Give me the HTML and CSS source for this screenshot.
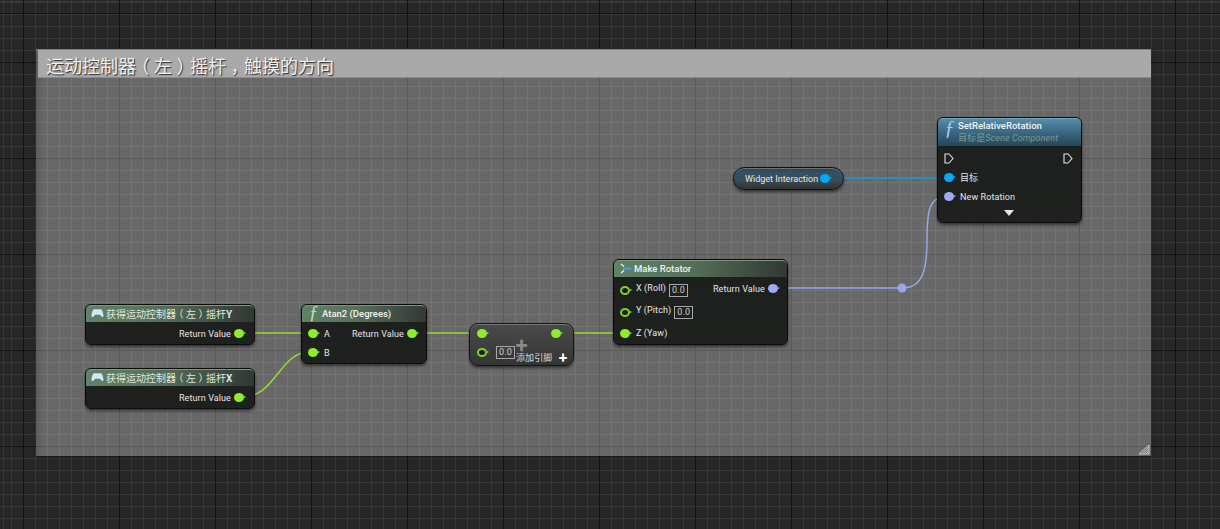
FILE: index.html
```html
<!DOCTYPE html>
<html lang="zh-CN">
  <head>
    <meta charset="UTF-8" />
    <title>Blueprint</title>
    <link rel="stylesheet" href="styles.css">
  </head>
  <body>
    <div class="graph">
      <section class="comment">
        <h1 class="comment-title">运动控制器<span class="punct">（</span>左<span class="punct">）</span>摇杆<span class="punct">，</span>触摸的方向</h1>
        <svg class="grip" width="12" height="11" viewBox="0 0 12 11">
          <path d="M11 1 L1 10 M11 3 L3.5 10 M11 5 L5.5 10 M11 7 L8 10 M11 9 L10 10 M1 10 H11 V1" stroke="#c8c8c8" stroke-width="1" fill="none" />
        </svg>
      </section>

      <svg class="wires" width="1220" height="529" viewBox="0 0 1220 529">
        <g fill="none" stroke="#90e030" stroke-width="1.5">
          <path d="M243 333 H309" />
          <path d="M243 397 C275 397 280 352 309 352" />
          <path d="M416 333 H477" />
          <path d="M561 333 H621" />
        </g>
        <path d="M830 178 H945" fill="none" stroke="#0a9fe8" stroke-width="1.5" />
        <path d="M777 288 H902 C922 288 927 272 927 240 C927 212 929 197 945 197" fill="none" stroke="#9aa5ee" stroke-width="1.5" />
        <circle cx="902" cy="288" r="4.5" fill="#9aa5ee" />
      </svg>

      <div class="node node-get-y">
        <div class="node-head head-get">
          <svg class="icon-pad" width="13" height="10" viewBox="0 0 14 10"><path d="M3.5 1 H10.5 C12 1 13 4 13.5 8 C13.6 9.5 12 9.8 11 8.5 L9.5 6.8 H4.5 L3 8.5 C2 9.8 .4 9.5 .5 8 C1 4 2 1 3.5 1 Z" fill="#d8e4f2" /></svg>
          <span>获得运动控制器<span class="punct">（</span>左<span class="punct">）</span>摇杆<b>Y</b></span>
        </div>
        <div class="node-body">
          <div class="row row-end"><span>Return Value</span><i class="pin green"></i></div>
        </div>
      </div>

      <div class="node node-get-x">
        <div class="node-head head-get">
          <svg class="icon-pad" width="13" height="10" viewBox="0 0 14 10"><path d="M3.5 1 H10.5 C12 1 13 4 13.5 8 C13.6 9.5 12 9.8 11 8.5 L9.5 6.8 H4.5 L3 8.5 C2 9.8 .4 9.5 .5 8 C1 4 2 1 3.5 1 Z" fill="#d8e4f2" /></svg>
          <span>获得运动控制器<span class="punct">（</span>左<span class="punct">）</span>摇杆<b>X</b></span>
        </div>
        <div class="node-body">
          <div class="row row-end"><span>Return Value</span><i class="pin green"></i></div>
        </div>
      </div>

      <div class="node node-atan">
        <div class="node-head">
          <span class="func">ƒ</span>
          <span>Atan2 (Degrees)</span>
        </div>
        <div class="node-body">
          <div class="row row-split">
            <div class="row"><i class="pin green"></i><span>A</span></div>
            <div class="row row-out"><span>Return Value</span><i class="pin green"></i></div>
          </div>
          <div class="row"><i class="pin green"></i><span>B</span></div>
        </div>
      </div>

      <div class="node node-add">
        <div class="row row-split">
          <i class="pin green"></i>
          <i class="pin green"></i>
        </div>
        <div class="row add-row">
          <i class="pin green hollow"></i>
          <span class="value">0.0</span>
          <span class="add-label">添加引脚</span>
          <span class="add-mark">✚</span>
        </div>
        <span class="add-ghost">✚</span>
      </div>

      <div class="node node-rotator">
        <div class="node-head">
          <svg class="icon-make" width="12" height="11" viewBox="0 0 12 11">
            <path d="M1 1 L4 3.5 M1 10 L4 7.5" stroke="#e8eef0" stroke-width="1.4" fill="none" />
            <rect x="3" y="4.5" width="8.5" height="2.2" fill="#4a9fe0" />
          </svg>
          <span>Make Rotator</span>
        </div>
        <div class="rotator-cols">
          <div class="rotator-in">
            <div class="row"><i class="pin green hollow"></i><span class="lift">X (Roll)</span><span class="value">0.0</span></div>
            <div class="row"><i class="pin green hollow"></i><span class="lift">Y (Pitch)</span><span class="value">0.0</span></div>
            <div class="row"><i class="pin green"></i><span>Z (Yaw)</span></div>
          </div>
          <div class="row row-out"><span>Return Value</span><i class="pin lilac"></i></div>
        </div>
      </div>

      <div class="node node-widget">
        <span>Widget Interaction</span>
        <i class="pin blue"></i>
      </div>

      <div class="node node-set">
        <div class="node-head head-blue">
          <span class="func">ƒ</span>
          <div class="head-text">
            <span>SetRelativeRotation</span>
            <span class="head-sub">目标是<em>Scene Component</em></span>
          </div>
        </div>
        <div class="set-body">
          <div class="row row-split exec-row">
            <svg width="10" height="11" viewBox="0 0 10 11"><path d="M1 1 H5 L9 5.5 L5 10 H1 Z" fill="none" stroke="#e4e4e4" stroke-width="1.1" /></svg>
            <svg width="10" height="11" viewBox="0 0 10 11"><path d="M1 1 H5 L9 5.5 L5 10 H1 Z" fill="none" stroke="#e4e4e4" stroke-width="1.1" /></svg>
          </div>
          <div class="row"><i class="pin blue"></i><span>目标</span></div>
          <div class="row"><i class="pin lilac"></i><span>New Rotation</span></div>
          <div class="more"></div>
        </div>
      </div>
    </div>
  </body>
</html>
```

FILE: styles.css
```css
* {
  margin: 0;
  padding: 0;
  box-sizing: border-box;
}
body {
  width: 1220px;
  height: 529px;
  overflow: hidden;
  background: #272727;
  font-family: Roboto, "Noto Sans CJK SC", sans-serif;
}
/* grid lines: 12px minor, 96px major */
.graph {
  position: relative;
  width: 1220px;
  height: 529px;
  background-color: #272727;
  background-image:
    repeating-linear-gradient(90deg, #121212 0 1px, transparent 1px 96px),
    repeating-linear-gradient(180deg, #121212 0 1px, transparent 1px 96px),
    repeating-linear-gradient(90deg, #383838 0 1px, transparent 1px 12px),
    repeating-linear-gradient(180deg, #383838 0 1px, transparent 1px 12px);
  background-position: 23px 0, 0 62px, 11px 0, 0 2px;
}

/* comment box */
.comment {
  position: absolute;
  left: 36px;
  top: 49px;
  width: 1115px;
  height: 407px;
  display: flex;
  flex-direction: column;
  background: rgba(255, 255, 255, 0.3);
  border-top: 1px solid #808080;
  box-shadow: 0 1px 3px rgba(0, 0, 0, 0.45), inset 8px 0 8px -6px rgba(0, 0, 0, 0.18);
}
.comment-title {
  height: 28px;
  margin-left: 2px;
  padding-left: 8px;
  background: #a9a9a9;
  border-bottom: 1px solid #8c8c8c;
  color: #f0f0f0;
  font-family: "Noto Sans CJK SC", sans-serif;
  font-size: 18px;
  font-weight: 400;
  line-height: 31px;
  text-shadow: 1px 1px 1px #2e2e2e;
}
/* centre the full-width punctuation in its cell */
.punct {
  font-feature-settings: "halt";
  padding: 0 0.25em;
}
.grip {
  position: absolute;
  right: 1px;
  bottom: 1px;
}
.wires {
  position: absolute;
  left: 0;
  top: 0;
}

/* nodes */
.node {
  position: absolute;
  display: flex;
  flex-direction: column;
  border: 1px solid #0b0b0b;
  border-radius: 6px;
  background: linear-gradient(#1c201d, #1f211f);
  box-shadow: 0 2px 3px rgba(0, 0, 0, 0.5);
  color: #e6e6e6;
  font-size: 9px;
  letter-spacing: 0.1px;
}
.node-get-y { left: 85px; top: 304px; width: 170px; height: 41px; }
.node-get-x { left: 85px; top: 368px; width: 170px; height: 41px; }
.node-atan { left: 301px; top: 304px; width: 126px; height: 60px; }
.node-add { left: 469px; top: 323px; width: 105px; height: 43px; }
.node-rotator { left: 613px; top: 259px; width: 175px; height: 86px; }
.node-widget { left: 733px; top: 167px; width: 111px; height: 23px; }
.node-set { left: 937px; top: 117px; width: 145px; height: 106px; }

.node-head {
  display: flex;
  align-items: center;
  gap: 2px;
  height: 17px;
  padding: 0 0 2px 5px;
  border-radius: 5px 5px 0 0;
  background: linear-gradient(90deg, #5f8366, #566f5a 45%, #313833);
  border-top: 1px solid #7d967f;
  color: #f2f2f2;
  font-weight: 500;
  font-size: 9.5px;
  letter-spacing: 0;
  white-space: nowrap;
}
.head-get {
  font-size: 10px;
  font-weight: 400;
  color: #dfe6df;
}
.head-get b {
  font-weight: 700;
}
.head-blue {
  height: 28px;
  align-items: flex-start;
  padding-bottom: 0;
  background: linear-gradient(#558cad, #3a6781 50%, #27465a);
  border-top: 1px solid #7aa7c0;
}
.head-text {
  display: flex;
  flex-direction: column;
  line-height: 13px;
}
.head-sub {
  color: #7a9a92;
  font-weight: 400;
  font-size: 9px;
  letter-spacing: 0.1px;
}
.func {
  width: 13px;
  font-family: "Liberation Serif", serif;
  font-style: italic;
  font-size: 18px;
  line-height: 16px;
  font-weight: 400;
  text-align: center;
  color: #c4e4b8;
}
.head-blue .func {
  color: #9fd4f0;
  font-size: 20px;
  line-height: 18px;
}
.icon-pad {
  flex: none;
}
.icon-make {
  flex: none;
  margin-left: 1px;
}

.node-body {
  display: flex;
  flex-direction: column;
  padding: 2px 10px 0 6px;
}
.node-atan .node-body {
  padding-right: 9px;
}
.row {
  display: flex;
  align-items: center;
  gap: 6px;
  height: 19px;
  white-space: nowrap;
}
.row-end {
  justify-content: flex-end;
  gap: 3px;
}
.row-out {
  gap: 3px;
}
.row-split {
  justify-content: space-between;
}

/* pins with the little arrow on the right */
.pin {
  position: relative;
  flex: none;
  display: block;
  width: 10px;
  height: 9px;
  border-radius: 50%;
}
.pin::after {
  content: "";
  position: absolute;
  left: 10px;
  top: 3px;
  border-left: 2px solid currentColor;
  border-top: 1.5px solid transparent;
  border-bottom: 1.5px solid transparent;
}
.pin.green { background: #8eee2c; color: #8eee2c; }
.pin.blue { background: #00a8f5; color: #00a8f5; }
.pin.lilac { background: #9daaf5; color: #9daaf5; }
.pin.hollow {
  background: #1d201c;
  border: 2px solid #7fd02a;
}
.pin.hollow::after {
  left: 8px;
  top: 1px;
}

.value {
  flex: none;
  width: 19px;
  height: 13px;
  border: 1px solid #a8a8a8;
  color: #cfcfcf;
  font-size: 9px;
  line-height: 11px;
  text-align: center;
}
.lift {
  margin-bottom: 4px;
}

/* commutative add node */
.node-add {
  padding: 0 12px 0 7px;
  border-radius: 9px;
  background: linear-gradient(#4a4a4a, #333533);
  border-color: #151515;
  box-shadow: 0 2px 3px rgba(0, 0, 0, 0.5), inset 0 1px 0 rgba(255, 255, 255, 0.25);
}
.add-row {
  gap: 0;
}
.add-row .value {
  margin-left: 9px;
}
.add-label {
  margin: 10px 0 0 1px;
  color: #d8d8d8;
  font-size: 9px;
}
.add-mark {
  margin: 10px 0 0 6px;
  color: #fff;
  font-size: 9px;
}
.add-ghost {
  position: absolute;
  left: 45px;
  top: 11px;
  color: #8a8a8a;
  font-size: 13px;
}

/* make rotator */
.rotator-cols {
  display: flex;
  justify-content: space-between;
  padding: 2px 9px 0 6px;
}
.rotator-in .row {
  height: 22px;
}
.rotator-in .row:last-child {
  height: 20px;
}
.rotator-in .value {
  margin-left: -3px;
}

/* variable getter */
.node-widget {
  flex-direction: row;
  align-items: center;
  gap: 2px;
  padding: 0 10px 0 11px;
  border-radius: 12px;
  background: linear-gradient(#3a4145, #2f5268 25%, #3a4a52 60%, #333);
  border-color: #0f0f0f;
  box-shadow: 0 2px 3px rgba(0, 0, 0, 0.5), inset 0 1px 0 rgba(255, 255, 255, 0.25);
  letter-spacing: 0;
  white-space: nowrap;
}

/* set relative rotation */
.set-body {
  display: flex;
  flex-direction: column;
  padding: 2px 8px 0 6px;
}
.set-body .exec-row {
  height: 20px;
}
.more {
  align-self: center;
  margin-top: 4px;
  border-top: 6px solid #e4e4e4;
  border-left: 5px solid transparent;
  border-right: 5px solid transparent;
}
```
